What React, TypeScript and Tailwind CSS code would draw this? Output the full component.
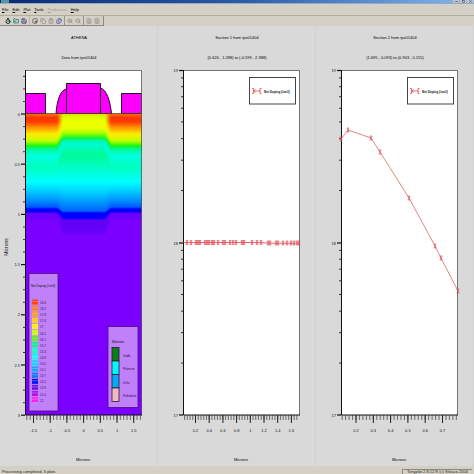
import type { ReactNode } from "react";
import {
  ClipboardList,
  Copy,
  Files,
  FileText,
  FolderOutput,
  Minus,
  Save,
  Square,
  SquareDashedMousePointer,
  Timer,
  X,
  ZoomIn,
  ZoomOut,
} from "lucide-react";

type Stop = { y: number; rgb: [number, number, number] };
type Point = [number, number];
type Tick = { at: number; label: string };

const MENU = ["File", "Edit", "Plot", "Tools", "Production", "Help"];

const PLOT = { left: 25.5, right: 141.5, top: 70.5, bottom: 415 };
const SURFACE = 114;

// Same number of stops in both profiles, so that a column between them can be blended.
const DIFFUSION: Stop[] = [
  { y: 114, rgb: [240, 110, 20] },
  { y: 118, rgb: [255, 50, 0] },
  { y: 122, rgb: [255, 60, 0] },
  { y: 127, rgb: [255, 140, 0] },
  { y: 134, rgb: [255, 235, 0] },
  { y: 141, rgb: [190, 255, 0] },
  { y: 146, rgb: [20, 245, 20] },
  { y: 149, rgb: [0, 250, 150] },
  { y: 156, rgb: [0, 255, 225] },
  { y: 167, rgb: [0, 255, 190] },
  { y: 182, rgb: [0, 255, 255] },
  { y: 191, rgb: [0, 205, 255] },
  { y: 201, rgb: [0, 140, 255] },
  { y: 207, rgb: [0, 90, 255] },
  { y: 209, rgb: [0, 0, 255] },
  { y: 212, rgb: [0, 0, 250] },
  { y: 213, rgb: [105, 0, 250] },
  { y: 219, rgb: [110, 0, 255] },
  { y: 220, rgb: [124, 0, 255] },
];

const CHANNEL: Stop[] = [
  { y: 114, rgb: [220, 225, 0] },
  { y: 117, rgb: [215, 255, 0] },
  { y: 120, rgb: [235, 255, 0] },
  { y: 124, rgb: [240, 255, 0] },
  { y: 128, rgb: [235, 255, 0] },
  { y: 133, rgb: [170, 255, 0] },
  { y: 138, rgb: [20, 245, 40] },
  { y: 140, rgb: [0, 245, 160] },
  { y: 144, rgb: [0, 250, 210] },
  { y: 155, rgb: [0, 250, 150] },
  { y: 182, rgb: [0, 255, 255] },
  { y: 193, rgb: [0, 205, 255] },
  { y: 204, rgb: [0, 140, 255] },
  { y: 211, rgb: [0, 100, 255] },
  { y: 213, rgb: [0, 0, 255] },
  { y: 218, rgb: [0, 0, 250] },
  { y: 220, rgb: [95, 0, 245] },
  { y: 234, rgb: [105, 0, 250] },
  { y: 235, rgb: [124, 0, 255] },
];

const SCALE = [
  { value: "18.6", color: "#ff4010" },
  { value: "18.2", color: "#ff8020" },
  { value: "17.8", color: "#ff9c20" },
  { value: "17.4", color: "#ffc818" },
  { value: "17", color: "#fff010" },
  { value: "16.5", color: "#c8ff10" },
  { value: "16.1", color: "#60f020" },
  { value: "15.7", color: "#10f090" },
  { value: "15.3", color: "#10ffc0" },
  { value: "14.9", color: "#10fff0" },
  { value: "14.5", color: "#10d8ff" },
  { value: "14.1", color: "#10a8ff" },
  { value: "13.7", color: "#1078ff" },
  { value: "13.2", color: "#0810f0" },
  { value: "12.8", color: "#7010f0" },
  { value: "12.4", color: "#b010e8" },
  { value: "12", color: "#ff20f0" },
];

const MATERIALS = [
  { name: "GaAs", color: "#0c7c1c" },
  { name: "Platinum", color: "#00f8ff" },
  { name: "InGa", color: "#08a8f8" },
  { name: "Palladium", color: "#f4b8c4" },
];

const SECTION_ONE_X = [
  29, 33, 38, 40, 42, 47, 49, 51, 54, 56, 60, 65, 67, 72, 75, 78, 84, 86, 94,
  99, 103, 110, 112, 118, 120, 125, 129, 133, 136, 139, 141,
];

const SECTION_TWO: Point[] = [
  [25, 139],
  [32, 130],
  [55, 138],
  [64, 152],
  [93, 198],
  [119, 246],
  [125, 258],
  [142, 291],
];

function range(count: number) {
  return Array.from({ length: count }, (_, index) => index);
}

function linearTicks(start: number, step: number, labels: string[]): Tick[] {
  return labels.map((label, index) => ({ at: start + step * index, label }));
}

// 0 above the channel, 1 in the diffused regions on both sides.
function diffusionWeight(x: number) {
  const distance = Math.abs(x - 83.5);
  const t = Math.min(1, Math.max(0, (distance - 20) / 8));
  return t * t * (3 - 2 * t);
}

function blend(weight: number): Stop[] {
  return CHANNEL.map((stop, index) => {
    const other = DIFFUSION[index];
    const mix = (a: number, b: number) => a + (b - a) * weight;
    return {
      y: mix(stop.y, other.y),
      rgb: [
        Math.round(mix(stop.rgb[0], other.rgb[0])),
        Math.round(mix(stop.rgb[1], other.rgb[1])),
        Math.round(mix(stop.rgb[2], other.rgb[2])),
      ],
    };
  });
}

function DopingMap() {
  const columns = range(116).map((index) => 26 + index);

  return (
    <g shapeRendering="crispEdges">
      <defs>
        {columns.map((x) => (
          <linearGradient
            key={x}
            id={`column-${x}`}
            gradientUnits="userSpaceOnUse"
            x1={0}
            x2={0}
            y1={SURFACE}
            y2={PLOT.bottom}
          >
            {blend(diffusionWeight(x)).map((stop, index) => (
              <stop
                key={index}
                offset={(stop.y - SURFACE) / (PLOT.bottom - SURFACE)}
                stopColor={`rgb(${stop.rgb.join(",")})`}
              />
            ))}
          </linearGradient>
        ))}
      </defs>
      {columns.map((x) => (
        <rect
          key={x}
          x={x}
          y={SURFACE}
          width={1}
          height={PLOT.bottom - SURFACE}
          fill={`url(#column-${x})`}
        />
      ))}
    </g>
  );
}

function XAxis({ majors, minorStep }: { majors: Tick[]; minorStep: number }) {
  const first = majors[0].at;
  const before = Math.floor((first - PLOT.left) / minorStep);
  const count = Math.floor((PLOT.right - first) / minorStep) + before + 1;

  return (
    <g stroke="#222">
      {range(count).map((index) => {
        const x = first + (index - before) * minorStep;
        return (
          <line key={index} x1={x} x2={x} y1={415} y2={420} strokeWidth={0.6} />
        );
      })}
      {majors.map((tick) => (
        <g key={tick.at}>
          <line x1={tick.at} x2={tick.at} y1={415} y2={423} strokeWidth={1} />
          <text
            x={tick.at}
            y={432}
            textAnchor="middle"
            stroke="none"
            fill="#111"
            className="text-[4px]"
          >
            {tick.label}
          </text>
        </g>
      ))}
    </g>
  );
}

function YAxis({ majors, minors }: { majors: Tick[]; minors: number[] }) {
  return (
    <g stroke="#111">
      {minors.map((y) => (
        <line key={y} x1={23} x2={25} y1={y} y2={y} strokeWidth={0.8} />
      ))}
      {majors.map((tick) => (
        <g key={tick.at}>
          <line x1={21} x2={25} y1={tick.at} y2={tick.at} strokeWidth={1.2} />
          <text
            x={20}
            y={tick.at + 1.5}
            textAnchor="end"
            stroke="none"
            fill="#111"
            className="text-[4px]"
          >
            {tick.label}
          </text>
        </g>
      ))}
    </g>
  );
}

function PlotFrame() {
  return (
    <>
      <path d="M25.5 70.5H141.5V415" fill="none" stroke="#555" strokeWidth={0.8} />
      <path d="M25.5 70V415H142" fill="none" stroke="#111" strokeWidth={1} />
    </>
  );
}

function Marker({ x, y }: { x: number; y: number }) {
  return (
    <path
      d={`M${x - 1.2} ${y - 2}h2.4M${x - 1.2} ${y + 2}h2.4M${x - 1} ${y - 2}l2 4M${x + 1} ${y - 2}l-2 4`}
      fill="none"
      stroke="#dc4450"
      strokeWidth={0.6}
    />
  );
}

function SeriesLegend() {
  return (
    <g>
      <rect x={91.5} y={77.5} width={46} height={26.5} fill="#fff" stroke="#333" strokeWidth={0.9} />
      <path
        d="M94 88.5h1.5v5H94M96 91h6.5M103.5 88.5H102v5h1.5M95.5 91l2-1.5M95.5 91l2 1.5"
        fill="none"
        stroke="#e04858"
        strokeWidth={0.8}
      />
      <text x={106} y={93} fill="#111" className="text-[3px] font-bold">
        Net Doping (/cm3)
      </text>
    </g>
  );
}

function Panel({
  title,
  subtitle,
  children,
}: {
  title: string;
  subtitle: string;
  children: ReactNode;
}) {
  return (
    <section className="bg-[#d9d9d9] pt-2 text-center text-[4px] leading-2 text-black shadow-[inset_-1px_0_#d1d1d1]">
      <h2>{title}</h2>
      <p className="mt-3">{subtitle}</p>
      <svg viewBox="0 62 158 390" className="block w-full">
        {children}
      </svg>
      <p className="mt-1 pl-2">Microns</p>
    </section>
  );
}

const logMinors = [70, 242.5].flatMap((top) =>
  [9, 8, 7, 6, 5, 4, 3, 2].map((n) => top - Math.log10(n / 10) * 172.5),
);

const logMajors: Tick[] = [
  { at: 70.5, label: "19" },
  { at: 243, label: "18" },
  { at: 415, label: "17" },
];

function StructurePanel() {
  const depth = linearTicks(114, 50.2, ["0", "0.5", "1", "1.5", "2", "2.5", "3"]);
  const minors = range(27)
    .map((index) => 76.4 + index * 12.55)
    .filter((_, index) => index % 4 !== 3);

  return (
    <Panel title="ATHENA" subtitle="Data from tpx01404">
      <rect x={25.5} y={70.5} width={116} height={344.5} fill="#fff" />
      <DopingMap />
      <g fill="#fa00fa" stroke="#300030" strokeWidth={1}>
        <path d="M25.5 93.5H45.5V113.5H25.5Z" />
        <path d="M121.5 93.5H141.5V113.5H121.5Z" />
        <path d="M56 113.5C57 101 60 90 66.5 89V113.5Z" />
        <path d="M111.5 113.5C110 101 107 90 100.5 88V113.5Z" />
        <path d="M66.5 83.5H100.5V113.5H66.5Z" />
      </g>
      <path d="M25.5 113.5H141.5" stroke="#604020" strokeWidth={0.8} />
      <PlotFrame />
      <YAxis majors={depth} minors={minors} />
      <XAxis
        majors={linearTicks(33.5, 16.7, ["-1.5", "-1", "-0.5", "0", "0.5", "1", "1.5"])}
        minorStep={3.34}
      />

      <rect x={29} y={273.5} width={29} height={137.5} fill="#c080fa" stroke="#501078" strokeWidth={0.8} />
      <text x={31} y={287} fill="#111" className="text-[3px]">
        Net Doping (/cm3)
      </text>
      {SCALE.map((step, index) => (
        <g key={step.value}>
          <rect x={32} y={299.5 + index * 6.1} width={6} height={5.3} fill={step.color} />
          <path
            d={`M32 ${301.5 + index * 6.1}h6M32 ${304.9 + index * 6.1}h6`}
            stroke="#d8c0f0"
            strokeWidth={0.4}
          />
          <text x={40} y={304 + index * 6.1} fill="#301058" className="text-[3px]">
            {step.value}
          </text>
        </g>
      ))}

      <rect x={108} y={326.5} width={30} height={81} fill="#c080fa" stroke="#501078" strokeWidth={0.8} />
      <text x={112} y={343} fill="#111" className="text-[3px]">
        Materials
      </text>
      {MATERIALS.map((material, index) => (
        <g key={material.name}>
          <rect
            x={112}
            y={347.5 + index * 13.5}
            width={7}
            height={13.5}
            fill={material.color}
            stroke="#222"
            strokeWidth={0.8}
          />
          <text x={123} y={356.5 + index * 13.5} fill="#301058" className="text-[3px]">
            {material.name}
          </text>
        </g>
      ))}

      <text transform="rotate(-90 8 247)" x={8} y={247} textAnchor="middle" fill="#111" className="text-[5px]">
        Microns
      </text>
    </Panel>
  );
}

function SectionOnePanel() {
  return (
    <Panel title="Section 1 from tpx01404" subtitle="(0.620 , 1.288) to (-0.599 , 2.388)">
      <rect x={25.5} y={70.5} width={116} height={344.5} fill="#fff" />
      <PlotFrame />
      <YAxis majors={logMajors} minors={logMinors} />
      <XAxis
        majors={linearTicks(37.5, 13.7, ["0.2", "0.4", "0.6", "0.8", "1", "1.2", "1.4", "1.6"])}
        minorStep={2.74}
      />
      <path d="M25.5 242.5H100L112 243.2H141.5" fill="none" stroke="#e03848" strokeWidth={0.8} />
      {SECTION_ONE_X.map((x) => (
        <Marker key={x} x={x} y={x < 105 ? 242.5 : 243} />
      ))}
      <SeriesLegend />
    </Panel>
  );
}

function SectionTwoPanel() {
  return (
    <Panel title="Section 2 from tpx01404" subtitle="(1.695 , 0.093) to (0.903 , 0.155)">
      <rect x={25.5} y={70.5} width={116} height={344.5} fill="#fff" />
      <PlotFrame />
      <YAxis majors={logMajors} minors={logMinors} />
      <XAxis
        majors={linearTicks(40, 17.3, ["0.2", "0.3", "0.4", "0.5", "0.6", "0.7"])}
        minorStep={3.46}
      />
      <polyline
        points={SECTION_TWO.map((point) => point.join(",")).join(" ")}
        fill="none"
        stroke="#d86868"
        strokeWidth={0.8}
      />
      {SECTION_TWO.map(([x, y]) => (
        <Marker key={x} x={x} y={y} />
      ))}
      <SeriesLegend />
    </Panel>
  );
}

function ToolButton({ label, children }: { label: string; children: ReactNode }) {
  return (
    <button type="button" aria-label={label} className="flex size-2 items-center justify-center">
      {children}
    </button>
  );
}

export default function App() {
  return (
    <div className="flex h-screen flex-col overflow-hidden bg-[#d4d0c6] font-['Liberation_Sans',sans-serif]">
      <header className="flex h-1 shrink-0 items-center justify-between border-b border-[#8eaccc] bg-linear-to-r from-[#0c2a70] via-[#2c58a4] to-[#88b8ec] px-px">
        <span className="h-full w-2 bg-[#5c94a4]" />
        <div className="flex h-full gap-px text-[#333]">
          <button type="button" aria-label="Minimize" className="flex h-full w-1.5 items-center justify-center bg-[#c4c4c8]">
            <Minus size={3} strokeWidth={5} />
          </button>
          <button type="button" aria-label="Maximize" className="flex h-full w-1.5 items-center justify-center bg-[#c4c4c8]">
            <Square size={3} strokeWidth={4} />
          </button>
          <button type="button" aria-label="Close" className="flex h-full w-1.5 items-center justify-center bg-[#c4c4c8]">
            <X size={3} strokeWidth={5} />
          </button>
        </div>
      </header>

      <nav className="flex h-3 shrink-0 items-center gap-1 border-b border-[#b5a998] px-0.5 text-[4px] leading-2 text-black">
        {MENU.map((item) => (
          <button
            key={item}
            type="button"
            disabled={item === "Production"}
            className="disabled:text-[#9c9890]"
          >
            <span className="underline">{item[0]}</span>
            {item.slice(1)}
          </button>
        ))}
      </nav>

      <div className="flex h-2.5 shrink-0">
        <div className="flex items-center border-r border-b border-[#8c8880] pr-0.5 pl-1 text-[#989490]">
          <ToolButton label="Run">
            <Timer size={6} strokeWidth={4} className="text-[#103c30]" />
          </ToolButton>
          <ToolButton label="Open">
            <FolderOutput size={6} strokeWidth={3} className="text-[#107878]" />
          </ToolButton>
          <ToolButton label="Save">
            <Save size={6} strokeWidth={3} className="text-[#4c3c88]" />
          </ToolButton>
          <span className="mx-px h-full w-px bg-[#b8b4ac]" />
          <ToolButton label="Select">
            <SquareDashedMousePointer size={6} strokeWidth={3} className="text-[#484848]" />
          </ToolButton>
          <ToolButton label="Copy">
            <Copy size={6} strokeWidth={3} />
          </ToolButton>
          <ToolButton label="Paste">
            <ClipboardList size={6} strokeWidth={3} />
          </ToolButton>
          <ToolButton label="Duplicate">
            <Files size={6} strokeWidth={3} className="text-[#5858b0]" />
          </ToolButton>
          <span className="mx-px h-full w-px bg-[#98948c]" />
          <ToolButton label="Zoom in">
            <ZoomIn size={6} strokeWidth={3} />
          </ToolButton>
          <ToolButton label="Zoom out">
            <ZoomOut size={6} strokeWidth={3} />
          </ToolButton>
          <span className="mx-px h-full w-px bg-[#98948c]" />
          <ToolButton label="Annotate">
            <FileText size={6} strokeWidth={3} />
          </ToolButton>
          <ToolButton label="Properties">
            <FileText size={6} strokeWidth={3} />
          </ToolButton>
        </div>
      </div>

      <main className="grid min-h-0 flex-1 grid-cols-3 overflow-hidden">
        <StructurePanel />
        <SectionOnePanel />
        <SectionTwoPanel />
      </main>

      <footer className="flex h-2 shrink-0 items-end justify-between px-0.5 text-[4px] leading-1 text-[#222]">
        <span>Processing completed, 3 plots</span>
        <span className="border-t border-l border-[#8c8880] px-1">Tonyplot 2.8.12.R (c) Silvaco 2004</span>
      </footer>
    </div>
  );
}
